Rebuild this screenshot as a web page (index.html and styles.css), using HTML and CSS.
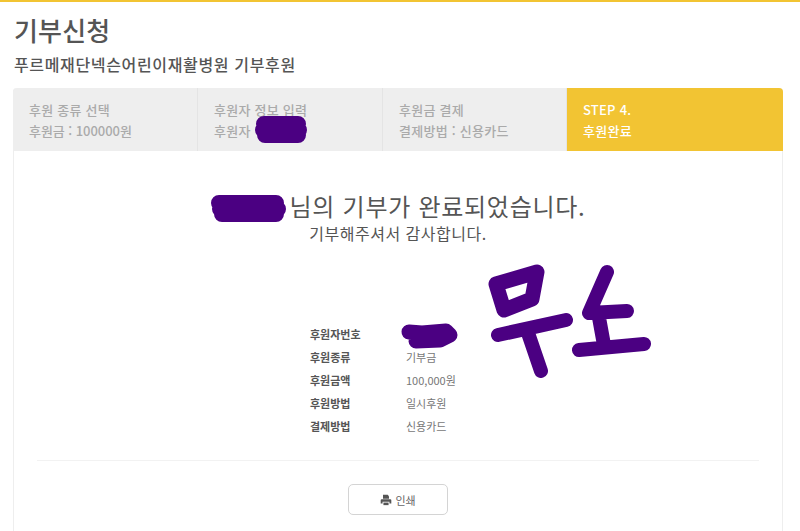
FILE: index.html
```html
<!DOCTYPE html>
<html lang="ko">
<head>
<meta charset="utf-8">
<title>기부신청</title>
<link rel="stylesheet" href="styles.css">
</head>
<body>
<div class="page">
  <h1 class="title">기부신청</h1>
  <h2 class="subtitle">푸르메재단넥슨어린이재활병원 기부후원</h2>
  <div class="panel">
    <ol class="steps">
      <li class="step"><span>후원 종류 선택</span><span class="tight">후원금 : 100000원</span></li>
      <li class="step"><span>후원자 정보 입력</span><span>후원자</span></li>
      <li class="step"><span>후원금 결제</span><span>결제방법 : 신용카드</span></li>
      <li class="step step-active"><span>STEP 4.</span><span>후원완료</span></li>
    </ol>
    <div class="body">
      <p class="done"><span class="done-name"></span>님의 기부가 완료되었습니다.</p>
      <p class="thanks">기부해주셔서 감사합니다.</p>
      <dl class="info">
        <div class="row"><dt>후원자번호</dt><dd></dd></div>
        <div class="row"><dt>후원종류</dt><dd>기부금</dd></div>
        <div class="row"><dt>후원금액</dt><dd>100,000원</dd></div>
        <div class="row"><dt>후원방법</dt><dd>일시후원</dd></div>
        <div class="row"><dt>결제방법</dt><dd>신용카드</dd></div>
      </dl>
      <hr class="rule">
      <div class="actions">
        <button class="print" type="button">
          <svg class="print-icon" viewBox="0 0 14 14" aria-hidden="true">
            <path d="M3.5 1h5.5l1.5 1.5V5.5h-7z" fill="#555"/>
            <path d="M2 6h10a1.2 1.2 0 0 1 1.2 1.2V11H11V9H3v2H.8V7.2A1.2 1.2 0 0 1 2 6z" fill="#555"/>
            <path d="M4 10h6v3H4z" fill="#555"/>
          </svg>
          인쇄
        </button>
      </div>
    </div>
  </div>
</div>
<svg class="scribble" viewBox="0 0 800 531" aria-hidden="true">
  <g fill="none" stroke="#4b0082" stroke-linecap="round" stroke-linejoin="round">
    <path d="M264 124 H298 M263 130 H299 M265 135 H298" stroke-width="16"/>
    <path d="M219 203 H276 M220 209 H278 M222 214 H276" stroke-width="16"/>
    <path d="M409 332 L422 333 L446 331 L450 335 L440 340 L416 341" stroke-width="15"/>
    <path d="M496 284 L537 272 L532 299 L504 310 Z" stroke-width="15"/>
    <path d="M498 335 L566 320 M527 330 L541 371" stroke-width="14"/>
    <path d="M607 272 L589 313 L627 311 M598 312 L604 345 M579 350 L644 344" stroke-width="14"/>
  </g>
</svg>
</body>
</html>
```
FILE: styles.css
```css
* { box-sizing: border-box; }
html, body { margin: 0; padding: 0; height: 531px; overflow: hidden; background: #fff; }
body {
  position: relative;
  border-top: 2px solid #f2c433;
  font-family: "Noto Sans CJK KR", "Noto Sans", sans-serif;
  color: #555;
}
.page { padding: 0 17px 0 13px; }
.title { margin: 11px 0 0 1px; font-size: 26px; line-height: 34px; font-weight: 500; letter-spacing: .2px; color: #555; }
.subtitle { margin: 5px 0 0 1px; font-size: 16px; line-height: 24px; font-weight: 500; letter-spacing: .65px; color: #555; }
.panel { margin-top: 12px; border: 1px solid #eee; border-top: 0; border-radius: 4px 4px 0 0; height: 460px; }
.steps { display: grid; grid-template-columns: 185px 185px 184px 1fr; margin: 0 -1px; padding: 0; list-style: none; height: 63px; }
.step {
  display: flex; flex-direction: column; gap: 2px; justify-content: center;
  padding: 0 15px 0 16px; background: #eee; border-right: 1px solid #e4e4e4;
  font-size: 13px; line-height: 19px; font-weight: 500; letter-spacing: .25px; color: #aaa;
}
.tight { letter-spacing: -.05px; }
.step:first-child { border-radius: 4px 0 0 0; }
.step-active { background: #f2c433; color: #fff; border-right: 0; border-radius: 0 4px 0 0; }
.body { display: flex; flex-direction: column; align-items: center; padding: 0 23px; }
.done { margin: 37px 0 0; font-size: 24px; line-height: 36px; letter-spacing: .72px; white-space: nowrap; font-weight: 400; color: #555; }
.done-name { display: inline-block; width: 79px; }
.thanks { margin: -2px 0 0; font-size: 16px; line-height: 22px; letter-spacing: .5px; color: #555; }
.info { align-self: flex-start; margin: 78px 0 0 273px; }
.row { display: flex; height: 23px; align-items: center; font-size: 11px; }
.row dt { width: 96px; font-weight: 700; color: #555; }
.row dd { margin: 0; color: #777; }
.rule { width: 100%; height: 1px; margin: 23px 0 0; border: 0; background: #f2f2f2; }
.actions { margin-top: 23px; }
.print {
  display: flex; align-items: center; justify-content: center; gap: 3px;
  width: 100px; height: 31px; padding: 0;
  background: #fff; border: 1px solid #d4d4d4; border-radius: 5px;
  font: 400 11px "Noto Sans CJK KR", sans-serif; color: #666;
}
.print-icon { width: 12px; height: 12px; }
.scribble { position: absolute; left: 0; top: -2px; width: 800px; height: 531px; pointer-events: none; filter: blur(.6px); }
```
